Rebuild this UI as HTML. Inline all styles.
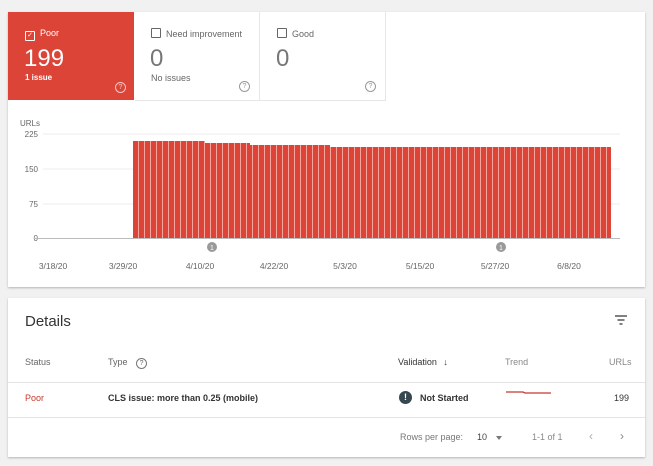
<!DOCTYPE html>
<html><head><style>
body{margin:0;width:653px;height:466px;background:#f1f1f1;font-family:"Liberation Sans",sans-serif;position:relative;overflow:hidden}
.card{position:absolute;background:#fff;box-shadow:0 1px 2px rgba(0,0,0,.25)}
.abs{position:absolute}
.tile{position:absolute;top:12px;height:88px;border-right:1px solid #e6e6e6;border-bottom:1px solid #e6e6e6}
.cb{display:inline-block;width:8px;height:8px;border:1.3px solid #666;border-radius:1px;vertical-align:-1px;margin-right:5px}
.q{position:absolute;width:9px;height:9px;border:1px solid #999;border-radius:50%;font-size:7px;line-height:9px;text-align:center;color:#999}
.g{color:#666;font-size:9px}
</style></head><body>
<div class="card" style="left:8px;top:12px;width:637px;height:275px"></div>
<div class="tile" style="left:8px;width:126px;background:#db4437;border:none">
 <div class="abs" style="left:17px;top:16px;color:#fff;font-size:9px"><span class="cb" style="border-color:#fff;text-align:center;font-size:7px;line-height:8px">✓</span>Poor</div>
 <div class="abs" style="left:16px;top:33px;color:#fff;font-size:24px">199</div>
 <div class="abs" style="left:17px;top:61px;color:#fff;font-size:8px;font-weight:bold">1 issue</div>
 <div class="q" style="left:107px;top:70px;border-color:#f4c6c0;color:#f4c6c0">?</div>
</div>
<div class="tile" style="left:135px;width:124px">
 <div class="abs g" style="left:16px;top:16px"><span class="cb"></span>Need improvement</div>
 <div class="abs" style="left:15px;top:33px;color:#777;font-size:24px">0</div>
 <div class="abs g" style="left:16px;top:61px">No issues</div>
 <div class="q" style="left:104px;top:69px">?</div>
</div>
<div class="tile" style="left:260px;width:125px">
 <div class="abs g" style="left:17px;top:16px"><span class="cb"></span>Good</div>
 <div class="abs" style="left:16px;top:33px;color:#777;font-size:24px">0</div>
 <div class="q" style="left:105px;top:69px">?</div>
</div>
<svg class="abs" style="left:0;top:0" width="653" height="290">
<defs><pattern id="p" x="133" y="0" width="6" height="10" patternUnits="userSpaceOnUse"><rect x="5" width="1" height="10" fill="#f3a69d"/></pattern>
<clipPath id="c"><rect x="133" y="141" width="72" height="97"/><rect x="205" y="143" width="45" height="95"/><rect x="250" y="145" width="80" height="93"/><rect x="330" y="147" width="281" height="91"/></clipPath></defs>
<g font-size="8" fill="#666" font-family="Liberation Sans">
<text x="20" y="126">URLs</text>
<text x="38" y="137" text-anchor="end">225</text><text x="38" y="172" text-anchor="end">150</text>
<text x="38" y="207" text-anchor="end">75</text><text x="38" y="241" text-anchor="end">0</text>
</g>
<g stroke="#eee"><line x1="43" y1="134" x2="620" y2="134"/><line x1="43" y1="169" x2="620" y2="169"/><line x1="43" y1="204" x2="620" y2="204"/></g>
<g fill="#db4437"><rect x="133" y="141" width="72" height="97"/><rect x="205" y="143" width="45" height="95"/><rect x="250" y="145" width="80" height="93"/><rect x="330" y="147" width="281" height="91"/></g>
<rect x="133" y="140" width="478" height="98" fill="url(#p)" clip-path="url(#c)"/>
<line x1="34" y1="238.5" x2="620" y2="238.5" stroke="#bbb"/>
<circle cx="212" cy="247" r="5" fill="#999"/><text x="212" y="250" font-size="7" fill="#fff" text-anchor="middle">1</text>
<circle cx="501" cy="247" r="5" fill="#999"/><text x="501" y="250" font-size="7" fill="#fff" text-anchor="middle">1</text>
<g font-size="8.5" fill="#666" text-anchor="middle"><text x="53" y="269">3/18/20</text><text x="123" y="269">3/29/20</text><text x="200" y="269">4/10/20</text><text x="274" y="269">4/22/20</text><text x="345" y="269">5/3/20</text><text x="420" y="269">5/15/20</text><text x="495" y="269">5/27/20</text><text x="569" y="269">6/8/20</text></g>
</svg>
<div class="card" style="left:8px;top:298px;width:637px;height:159px"></div>
<div class="abs" style="left:25px;top:313px;font-size:15px;color:#333">Details</div>
<svg class="abs" style="left:614px;top:314px" width="14" height="12"><g stroke="#555" stroke-width="1.5"><line x1="1" y1="2" x2="13" y2="2"/><line x1="3.5" y1="6" x2="10.5" y2="6"/><line x1="5.5" y1="10" x2="8.5" y2="10"/></g></svg>
<div class="abs g" style="left:25px;top:357px">Status</div>
<div class="abs g" style="left:108px;top:357px">Type <span style="display:inline-block;width:9px;height:9px;border:1px solid #777;border-radius:50%;font-size:7px;text-align:center;line-height:9px;margin-left:6px">?</span></div>
<div class="abs" style="left:398px;top:357px;font-size:9px;color:#333">Validation <span style="margin-left:4px">&#8595;</span></div>
<div class="abs g" style="left:505px;top:357px;color:#888">Trend</div>
<div class="abs g" style="left:609px;top:357px;color:#888">URLs</div>
<div class="abs" style="left:8px;top:382px;width:637px;height:1px;background:#e4e4e4"></div>
<div class="abs" style="left:25px;top:393px;font-size:9px;color:#c5392b">Poor</div>
<div class="abs" style="left:108px;top:393px;font-size:9px;color:#333;font-weight:bold">CLS issue: more than 0.25 (mobile)</div>
<div class="abs" style="left:399px;top:391px;width:13px;height:13px;border-radius:50%;background:#37474f;color:#fff;font-size:9px;font-weight:bold;text-align:center;line-height:13px">!</div>
<div class="abs" style="left:420px;top:393px;font-size:9px;color:#333;font-weight:bold">Not Started</div>
<svg class="abs" style="left:505px;top:390px" width="48" height="6"><polyline points="1,2 18,2 20,3 46,3" stroke="#c5392b" stroke-width="1.3" fill="none"/></svg>
<div class="abs" style="left:614px;top:393px;font-size:9px;color:#333">199</div>
<div class="abs" style="left:8px;top:417px;width:637px;height:1px;background:#e4e4e4"></div>
<div class="abs g" style="left:400px;top:432px;color:#777">Rows per page:</div>
<div class="abs" style="left:477px;top:432px;font-size:9px;color:#444">10</div>
<div class="abs" style="left:496px;top:436px;border:3.5px solid transparent;border-top:4px solid #777"></div>
<div class="abs g" style="left:532px;top:432px;color:#888">1-1 of 1</div>
<div class="abs" style="left:589px;top:429px;font-size:12px;color:#aaa">&#8249;</div>
<div class="abs" style="left:620px;top:429px;font-size:12px;color:#888">&#8250;</div>
</body></html>
